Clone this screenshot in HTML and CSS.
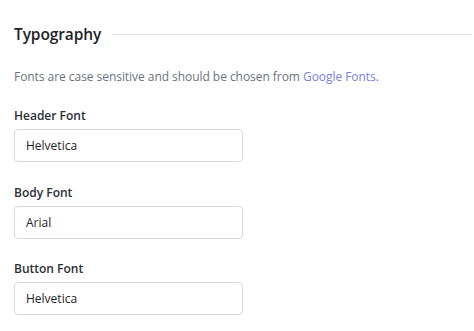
FILE: index.html
```html
<!DOCTYPE html>
<html>

<head>
    <link rel="stylesheet" href="styles.css">
</head>

<body>
    <div class="settings">
        <div class="section-title">
            <h3>Typography</h3>
            <div class="rule"></div>
        </div>
        <p class="hint">Fonts are case sensitive and should be chosen from <a href="#">Google Fonts</a>.</p>

        <div class="field">
            <label for="header-font">Header Font</label>
            <input type="text" id="header-font" value="Helvetica">
        </div>
        <div class="field">
            <label for="body-font">Body Font</label>
            <input type="text" id="body-font" value="Arial">
        </div>
        <div class="field">
            <label for="button-font">Button Font</label>
            <input type="text" id="button-font" value="Helvetica">
        </div>
    </div>
</body>

</html>
```

FILE: styles.css
```css
body {
    margin: 0;
    font-family: "Open Sans", "Noto Sans", sans-serif;
    background-color: #fff;
    color: #1f2937;
}

.settings {
    padding: 23px 2px 0 14px;
}

.section-title {
    display: flex;
    align-items: center;
    gap: 11px;
}

.section-title h3 {
    margin: 0;
    font-size: 15.5px;
    font-weight: 600;
    letter-spacing: -0.1px;
    color: #1f2328;
}

.rule {
    flex: 1;
    height: 1px;
    background-color: #e0e0e0;
}

.hint {
    margin: 23px 0 0;
    font-size: 12px;
    letter-spacing: -0.05px;
    color: #6b7280;
}

.hint a {
    color: #7b7fdc;
    text-decoration: none;
}

.field {
    margin-top: 22px;
}

.field + .field {
    margin-top: 21.5px;
}

label {
    display: block;
    font-size: 12px;
    font-weight: 600;
    color: #2a2f36;
    margin-bottom: 5px;
}

.field input {
    box-sizing: border-box;
    width: 229px;
    height: 33px;
    padding: 0 11px;
    border: 1px solid #d9d9d9;
    border-radius: 4px;
    font-family: inherit;
    font-size: 12px;
    color: #1f2328;
}
```
